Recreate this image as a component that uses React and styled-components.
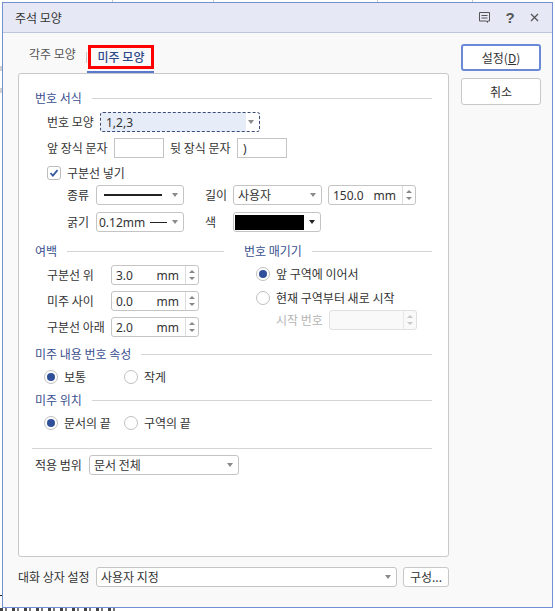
import React from "react";
import styled, { createGlobalStyle } from "styled-components";

const Global = createGlobalStyle`
  html, body { margin: 0; padding: 0; background: #fff; overflow: hidden; }
  body { width: 555px; height: 611px; font: 12px/16px "Noto Sans CJK KR", "Noto Sans", sans-serif; color: #333; }
  * { box-sizing: border-box; }
`;

const Desk = styled.div`
  width: 555px; height: 611px; padding: 2px 2px 0; overflow: hidden; background-color: #fff;
  background-image:
    linear-gradient(#c8c8c8, #c8c8c8), linear-gradient(#c8c8c8, #c8c8c8),
    linear-gradient(#c8c8c8, #c8c8c8), linear-gradient(#c8c8c8, #c8c8c8),
    linear-gradient(#222, #222),
    linear-gradient(#d0d0d0, #d0d0d0), linear-gradient(#d0d0d0, #d0d0d0);
  background-size: 1px 2px, 1px 2px, 1px 2px, 1px 2px, 2px 1px, 2px 5px, 2px 5px;
  background-position: 112px 0, 213px 0, 377px 0, 472px 0, 0 595px, 0 66px, 0 88px;
  background-repeat: no-repeat;
`;
const Dialog = styled.div`
  width: 551px; height: 606px; border: 1px solid #7390d2; background: #f9f9f9; display: flex; flex-direction: column;
`;
const TitleBar = styled.div`
  height: 30px; flex: none; background: #e6e9f5; border-bottom: 1px solid #bcc6de;
  display: flex; align-items: center; padding: 0 12px 0 12px; color: #333;
`;
const TitleText = styled.span` flex: 1; `;
const TitleIcons = styled.div` display: flex; align-items: center; gap: 13px; `;
const HelpMark = styled.span` font: bold 15px/16px "Liberation Sans", sans-serif; color: #555; width: 12px; text-align: center; `;
const Body = styled.div` flex: 1; display: flex; padding: 9px 11px 0 15px; gap: 12px; `;
const LeftCol = styled.div` width: 431px; flex: none; display: flex; flex-direction: column; `;
const RightCol = styled.div` width: 80px; flex: none; padding-top: 2px; display: flex; flex-direction: column; gap: 7px; `;
const TabRow = styled.div` height: 31px; display: flex; align-items: flex-start; `;
const TabPlain = styled.div` padding: 4px 0 0 11px; width: 68px; height: 31px; color: #555; `;
const TabSep = styled.span` display: block; width: 1px; height: 11px; margin-top: 10px; background: #c8c8c8; `;
const TabActive = styled.div` width: 67px; height: 31px; border-bottom: 2px solid #5a78cc; padding: 3px 0 0 1px; `;
const Annot = styled.div`
  width: 66px; height: 24px; border: 3px solid #f00; display: flex; align-items: center; justify-content: center;
  font-weight: 500; color: #2f4a8a; line-height: 16px;
`;
const Panel = styled.div`
  height: 484px; background: #fff; border: 1px solid #c9c9c9; border-radius: 3px; padding: 16px 16px 0;
`;
const Header = styled.div`
  height: 16px; display: flex; align-items: center; gap: 10px; color: #3a4f8f; margin-top: ${p => p.$mt || 0}px;
  &::after { content: ""; flex: 1; height: 1px; background: #d4d4d4; }
`;
const Row = styled.div`
  height: 20px; display: flex; align-items: center; margin-top: ${p => p.$mt || 0}px; padding-left: ${p => p.$pl || 0}px;
`;
const Label = styled.span`
  flex: none; width: ${p => (p.$w ? p.$w + "px" : "auto")}; margin-left: ${p => p.$ml || 0}px; color: ${p => p.$dim ? "#b4b4b4" : "#333"}; white-space: nowrap;
`;
const Select = styled.div`
  position: relative; height: 20px; flex: none; width: ${p => p.$w}px; margin-left: ${p => p.$ml || 0}px;
  background: #fff; border: 1px solid #c4c4c4; border-radius: 3px;
  display: flex; align-items: center; padding-left: ${p => p.$pad ?? 4}px; padding-right: 16px; color: #333; white-space: nowrap;
`;
const FocusSelect = styled(Select)`
  border: 1px dashed #3c4c74; background: linear-gradient(90deg, #e6ecf8 0, #e6ecf8 145px, #fff 145px); padding-left: 5px;
`;
const Arrow = styled.i`
  position: absolute; right: ${p => p.$r ?? 5}px; top: 7px; width: 0; height: 0;
  border-left: 3px solid transparent; border-right: 3px solid transparent; border-top: 4px solid ${p => p.$dark ? "#222" : "#8a8a8a"};
`;
const BoxInput = styled.div`
  height: 20px; width: 50px; flex: none; border: 1px solid #c4c4c4; background: #fff; padding-left: 5px; display: flex; align-items: center;
`;
const Spin = styled.div`
  height: 20px; flex: none; width: 88px; margin-left: ${p => p.$ml || 0}px; border: 1px solid ${p => p.$off ? "#e0e0e0" : "#c4c4c4"}; border-radius: 3px; background: ${p => p.$off ? "#f9f9f9" : "#fff"};
  display: flex; align-items: center; padding-left: 4px;
`;
const SpinValue = styled.span` flex: 1; `;
const SpinUnit = styled.span` margin-right: 6px; `;
const SpinBtns = styled.div`
  width: 13px; height: 18px; flex: none; border-left: 1px solid ${p => p.$off ? "#e8e8e8" : "#dcdcdc"};
  display: flex; flex-direction: column; align-items: center; justify-content: center; gap: 4px;
`;
const Up = styled.i` width: 0; height: 0; border-left: 3px solid transparent; border-right: 3px solid transparent; border-bottom: 3px solid ${p => p.$off ? "#c8c8c8" : "#888"}; `;
const Down = styled(Up)` border-bottom: 0; border-top: 3px solid ${p => p.$off ? "#c8c8c8" : "#888"}; `;
const Check = styled.span`
  width: 14px; height: 14px; flex: none; border: 1px solid #bdbdbd; border-radius: 3px; background: #fff; display: flex; align-items: center; justify-content: center; margin-right: 6px;
`;
const CheckRow = styled.div` height: 14px; display: flex; align-items: center; margin: 8px 0 0 12px; `;
const Radio = styled.span`
  width: 14px; height: 14px; flex: none; border-radius: 50%; border: 1px solid #bfbfbf; background: #fff; display: flex; align-items: center; justify-content: center; margin-right: 6px;
  &::after { content: ""; width: 8px; height: 8px; border-radius: 50%; background: ${p => p.$on ? "#2f4f9b" : "transparent"}; }
`;
const RadioItem = styled.div` display: flex; align-items: center; width: ${p => p.$w ? p.$w + "px" : "auto"}; white-space: nowrap; `;
const LineSample = styled.span` display: block; height: ${p => p.$h}px; width: ${p => p.$w}px; background: #222; margin-left: ${p => p.$ml || 0}px; flex: none; `;
const Swatch = styled.span` display: block; width: 69px; height: 15px; background: #000; flex: none; `;
const Columns = styled.div` display: grid; grid-template-columns: 189px 188px; column-gap: 20px; margin-top: 11px; `;
const Divider = styled.div` height: 1px; background: #d4d4d4; margin: 15px 0 0 -3px; `;
const Footer = styled.div` height: 20px; margin-top: 10px; display: flex; align-items: center; `;
const Action = styled.button`
  width: 80px; height: 27px; padding: 0; font: inherit; color: #333; background: #fff; border-radius: 3px;
  border: ${p => p.$primary ? "2px solid #6a8ad8" : "1px solid #c8c8c8"};
`;
const Config = styled.button`
  width: 46px; height: 20px; margin-left: 6px; padding: 0; font: inherit; color: #333; background: #fff; border: 1px solid #c8c8c8; border-radius: 3px; flex: none;
`;
const BelowMarks = styled.div`
  width: 116px; height: 3px; margin-left: -2px;
  background: repeating-linear-gradient(90deg, #444 0 3px, #fff 3px 5px, #777 5px 7px, #fff 7px 12px);
`;
const Value = styled.span` display: block; white-space: pre; `;
const Latin = styled.span` font-family: "Noto Sans", sans-serif; `;

const Num = ({ children }) => <Value><Latin>{children}</Latin></Value>;

const SpinBox = ({ value, unit = "mm", ml, off }) => (
  <Spin $ml={ml} $off={off}>
    <SpinValue><Latin>{value}</Latin></SpinValue>
    {unit && <SpinUnit><Latin>{unit}</Latin></SpinUnit>}
    <SpinBtns $off={off}><Up $off={off} /><Down $off={off} /></SpinBtns>
  </Spin>
);

export default function App() {
  return (
    <Desk>
      <Global />
      <Dialog>
        <TitleBar>
          <TitleText>주석 모양</TitleText>
          <TitleIcons>
            <svg width="13" height="13" viewBox="0 0 13 13" fill="none" stroke="#555" strokeWidth="1">
              <path d="M1.5 1.5h10v8.5h-2v1.5l-1-1.5h-7z" />
              <path d="M3.5 4.5h6M3.5 7h6" />
            </svg>
            <HelpMark>?</HelpMark>
            <svg width="11" height="11" viewBox="0 0 11 11" fill="none" stroke="#555" strokeWidth="1.3">
              <path d="M2 2l7 7M9 2l-7 7" />
            </svg>
          </TitleIcons>
        </TitleBar>
        <Body>
          <LeftCol>
            <TabRow>
              <TabPlain>각주 모양</TabPlain>
              <TabSep />
              <TabActive><Annot>미주 모양</Annot></TabActive>
            </TabRow>
            <Panel>
              <Header>번호 서식</Header>
              <Row $mt={6} $pl={12}>
                <Label $w={53}>번호 모양</Label>
                <FocusSelect $w={160}><Num>1,2,3</Num><Arrow /></FocusSelect>
              </Row>
              <Row $mt={6} $pl={12}>
                <Label $w={67}>앞 장식 문자</Label>
                <BoxInput />
                <Label $w={67} $ml={6}>뒷 장식 문자</Label>
                <BoxInput><Num>)</Num></BoxInput>
              </Row>
              <CheckRow>
                <Check>
                  <svg width="10" height="10" viewBox="0 0 10 10" fill="none" stroke="#3a5aa0" strokeWidth="1.8">
                    <path d="M1.5 5.2l2.4 2.4 4.6-5.4" />
                  </svg>
                </Check>
                구분선 넣기
              </CheckRow>
              <Row $mt={5} $pl={32}>
                <Label $w={29}>종류</Label>
                <Select $w={88}><LineSample $h={2} $w={58} $ml={3} /><Arrow /></Select>
                <Label $w={28} $ml={21}>길이</Label>
                <Select $w={89}>사용자<Arrow /></Select>
                <SpinBox value="150.0" ml={6} />
              </Row>
              <Row $mt={7} $pl={32}>
                <Label $w={29}>굵기</Label>
                <Select $w={88} $pad={2}><Num>0.12mm</Num><LineSample $h={1} $w={17} $ml={5} /><Arrow /></Select>
                <Label $w={28} $ml={21}>색</Label>
                <Select $w={88} $pad={1}><Swatch /><Arrow $dark /></Select>
              </Row>
              <Columns>
                <div>
                  <Header>여백</Header>
                  <Row $mt={6} $pl={12}><Label $w={64}>구분선 위</Label><SpinBox value="3.0" /></Row>
                  <Row $mt={6} $pl={12}><Label $w={64}>미주 사이</Label><SpinBox value="0.0" /></Row>
                  <Row $mt={6} $pl={12}><Label $w={64}>구분선 아래</Label><SpinBox value="2.0" /></Row>
                </div>
                <div>
                  <Header>번호 매기기</Header>
                  <Row $mt={5} $pl={12}><RadioItem><Radio $on />앞 구역에 이어서</RadioItem></Row>
                  <Row $mt={4} $pl={12}><RadioItem><Radio />현재 구역부터 새로 시작</RadioItem></Row>
                  <Row $mt={2} $pl={32}><Label $w={53} $dim>시작 번호</Label><SpinBox value="" unit="" off /></Row>
                </div>
              </Columns>
              <Header $mt={9}>미주 내용 번호 속성</Header>
              <Row $mt={5} $pl={9}>
                <RadioItem $w={80}><Radio $on />보통</RadioItem>
                <RadioItem><Radio />작게</RadioItem>
              </Row>
              <Header $mt={5}>미주 위치</Header>
              <Row $mt={5} $pl={9}>
                <RadioItem $w={80}><Radio $on />문서의 끝</RadioItem>
                <RadioItem><Radio />구역의 끝</RadioItem>
              </Row>
              <Divider />
              <Row $mt={6}>
                <Label $w={54}>적용 범위</Label>
                <Select $w={150}>문서 전체<Arrow /></Select>
              </Row>
            </Panel>
            <Footer>
              <Label $w={78}>대화 상자 설정</Label>
              <Select $w={301}>사용자 지정<Arrow /></Select>
              <Config>구성...</Config>
            </Footer>
          </LeftCol>
          <RightCol>
            <Action $primary>설정(<u>D</u>)</Action>
            <Action>취소</Action>
          </RightCol>
        </Body>
      </Dialog>
      <BelowMarks />
    </Desk>
  );
}
